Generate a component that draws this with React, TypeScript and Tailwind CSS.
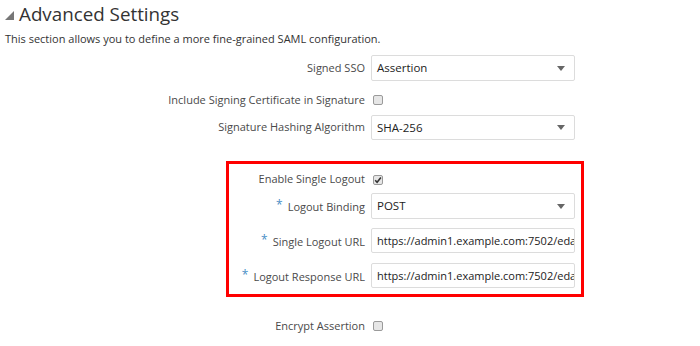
import React from 'react';

const font = { fontFamily: '"Open Sans", "Noto Sans", sans-serif' };

const Checkbox = ({ checked = false }: { checked?: boolean }) => (
  <span className="flex h-[10px] w-[10px] items-center justify-center rounded-[2px] border border-[#9a9a9a] bg-[#e6e6e6]">
    {checked && (
      <svg width="8" height="8" viewBox="0 0 8 8">
        <path d="M1.2 4.2 L3.1 6.2 L6.9 1.6" fill="none" stroke="#333" strokeWidth="1.6" />
      </svg>
    )}
  </span>
);

const Select = ({ value, h = 'h-[26px]' }: { value: string; h?: string }) => (
  <div className={`flex ${h} w-[204px] items-center justify-between rounded-[2px] border border-[#dcdcdc] bg-white pl-[5px] pr-[9px] text-[11.5px] text-[#222]`}>
    <span>{value}</span>
    <svg width="8" height="5" viewBox="0 0 8 5">
      <path d="M0 0 H8 L4 5 Z" fill="#666" />
    </svg>
  </div>
);

const TextField = ({ value }: { value: string }) => (
  <input
    readOnly
    value={value}
    className="h-[25px] w-[204px] rounded-[2px] border border-[#dcdcdc] bg-white pl-[5px] text-[11px] text-[#222] outline-none"
    style={font}
  />
);

const Req = () => <span className="mr-[5px] align-[2px] text-[12px] text-[#4a8fc6]">*</span>;

const App = () => {
  return (
    <div className="h-[346px] w-[700px] overflow-hidden bg-white text-[#4a4a4a]" style={font}>
      <div className="flex items-center pl-[5px] pt-[1px]">
        <svg width="9" height="9" viewBox="0 0 9 9" className="mt-[3px]">
          <path d="M9 0 V9 H0 Z" fill="#777" />
        </svg>
        <h1 className="ml-[5px] text-[18.8px] leading-[26px] text-[#333]">Advanced Settings</h1>
      </div>
      <p className="mt-[4px] pl-[5px] text-[11px] leading-[16px] text-[#333]">
        This section allows you to define a more fine-grained SAML configuration.
      </p>

      <div className="mt-[8px] text-[11px]">
        <div className="flex items-center">
          <div className="w-[365px] text-right">Signed SSO</div>
          <div className="ml-[6px]"><Select value="Assertion" /></div>
        </div>
        <div className="mt-[14px] flex h-[10px] items-center">
          <div className="w-[365px] text-right">Include Signing Certificate in Signature</div>
          <div className="ml-[8px]"><Checkbox /></div>
        </div>
        <div className="mt-[10px] flex items-center">
          <div className="w-[365px] text-right">Signature Hashing Algorithm</div>
          <div className="ml-[6px]"><Select value="SHA-256" h="h-[25px]" /></div>
        </div>

        <div className="ml-[226px] mt-[21px] w-[358px] border-[3px] border-[#ff0000] pb-[6px] pt-[11px]">
          <div className="flex h-[9px] items-center">
            <div className="w-[136px] text-right">Enable Single Logout</div>
            <div className="ml-[8px]"><Checkbox checked /></div>
          </div>
          <div className="mt-[9px] flex items-center">
            <div className="w-[136px] text-right"><Req />Logout Binding</div>
            <div className="ml-[6px]"><Select value="POST" /></div>
          </div>
          <div className="mt-[9px] flex items-center">
            <div className="w-[136px] whitespace-nowrap text-right"><Req />Single Logout URL</div>
            <div className="ml-[6px]"><TextField value="https://admin1.example.com:7502/edas" /></div>
          </div>
          <div className="mt-[10px] flex items-center">
            <div className="w-[136px] whitespace-nowrap text-right"><Req />Logout Response URL</div>
            <div className="ml-[6px]"><TextField value="https://admin1.example.com:7502/edas" /></div>
          </div>
        </div>

        <div className="mt-[24px] flex h-[10px] items-center">
          <div className="w-[365px] text-right">Encrypt Assertion</div>
          <div className="ml-[8px]"><Checkbox /></div>
        </div>
      </div>
    </div>
  );
};

export default App;
